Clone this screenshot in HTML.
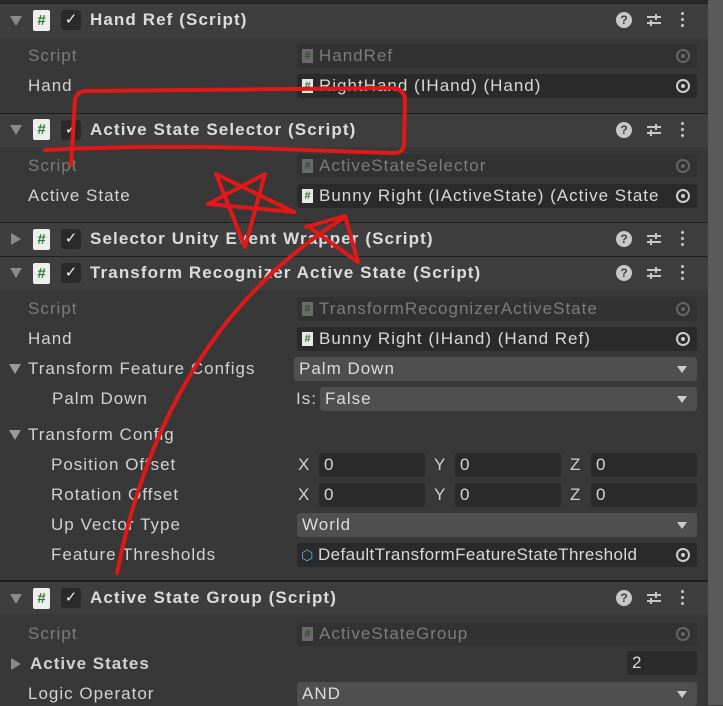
<!DOCTYPE html>
<html><head><meta charset="utf-8"><style>
body{margin:0;width:723px;height:705px;background:#383838;overflow:hidden;position:relative;font-family:"Liberation Sans","DejaVu Sans",sans-serif;}
.a{position:absolute;}
.hdr{position:absolute;left:0;width:708px;background:#3e3e3e;border-top:1px solid #1f1f1f;}
.ht{position:absolute;left:90px;font-weight:bold;font-size:17px;color:#dcdcdc;letter-spacing:1.1px;}
.tri{position:absolute;left:10px;width:0;height:0;border-left:6px solid transparent;border-right:6px solid transparent;border-top:10px solid #8a8a8a;}
.trir{position:absolute;width:0;height:0;border-top:6px solid transparent;border-bottom:6px solid transparent;border-left:10px solid #8a8a8a;}
.doc{position:absolute;left:33px;width:17px;height:21px;background:#eee;border-radius:2px;color:#2e7d32;font-size:15px;font-weight:bold;text-align:center;line-height:21px;}
.cb{position:absolute;left:61px;width:20px;height:20px;background:#2a2a2a;border-radius:3px;color:#eee;font-size:15px;text-align:center;line-height:20px;}
.lbl{position:absolute;font-size:17px;color:#d2d2d2;letter-spacing:1px;}
.dim{color:#7c7c7c;}
.fld{position:absolute;left:297px;width:400px;height:24px;background:#2a2a2a;border-radius:3px;font-size:17px;color:#d8d8d8;line-height:24px;box-sizing:border-box;padding-left:22px;white-space:nowrap;overflow:hidden;letter-spacing:1px;}
.fld.d{background:#323232;color:#7c7c7c;}
.ic{position:absolute;left:5px;top:5px;width:11px;height:14px;background:#e8e8e8;color:#2e7d32;font-size:11px;line-height:14px;text-align:center;font-weight:bold;letter-spacing:0;}
.d .ic{background:#6a6a6a;color:#2e4d2e;}
.tgt{position:absolute;right:0;top:0;width:28px;height:24px;background:#2a2a2a;}
.tgt:after{content:"";position:absolute;left:7px;top:5px;width:10px;height:10px;border:2px solid #ccc;border-radius:50%;}
.tgt:before{content:"";position:absolute;left:12px;top:10px;width:4px;height:4px;background:#ccc;border-radius:50%;z-index:1;}
.d .tgt{background:#323232;} .d .tgt:after{border-color:#666;} .d .tgt:before{background:#666;}
.dd{position:absolute;height:24px;background:#4f4f4f;border-radius:3px;font-size:17px;color:#dcdcdc;line-height:24px;padding-left:5px;box-sizing:border-box;letter-spacing:1px;}
.dd:after{content:"";position:absolute;right:10px;top:9px;border-left:5px solid transparent;border-right:5px solid transparent;border-top:7px solid #ccc;}
.num{position:absolute;height:24px;width:106px;background:#2a2a2a;border-radius:3px;font-size:17px;color:#d8d8d8;line-height:24px;padding-left:5px;box-sizing:border-box;}
.q{position:absolute;left:616px;width:16px;height:16px;border-radius:50%;background:#c8c8c8;color:#3e3e3e;font-size:12px;font-weight:bold;text-align:center;line-height:16px;}
.sl{position:absolute;left:646px;width:16px;height:14px;}
.dots{position:absolute;left:681px;width:4px;}
.dots i{display:block;width:3px;height:3px;background:#c8c8c8;border-radius:50%;margin-bottom:3px;}
</style></head><body>
<div class="a" style="left:708px;top:0;width:15px;height:705px;background:#5a5a5a"></div>
<div class="a" style="left:0;top:0;width:708px;height:3px;background:#2a2a2a"></div>

<div class="hdr" style="top:3px;height:34px"></div>
<div class="tri" style="top:16px"></div><div class="doc" style="top:10px">#</div><div class="cb" style="top:10px">✓</div>
<div class="ht" style="top:10px">Hand Ref (Script)</div>
<div class="q" style="top:12px">?</div>
<svg class="sl" style="top:13px" viewBox="0 0 16 14"><path d="M1 4h14M1 10h14M10 1v6M5 7v6" stroke="#c8c8c8" stroke-width="2"/></svg>
<div class="dots" style="top:12px"><i></i><i></i><i></i></div>
<div class="lbl dim" style="left:28px;top:46px">Script</div>
<div class="fld d" style="top:44px"><span class="ic">#</span>HandRef<span class="tgt"></span></div>
<div class="lbl" style="left:28px;top:76px">Hand</div>
<div class="fld" style="top:74px"><span class="ic">#</span>RightHand (IHand) (Hand)<span class="tgt"></span></div>

<div class="hdr" style="top:113px;height:33px"></div>
<div class="tri" style="top:125px"></div><div class="doc" style="top:119px">#</div><div class="cb" style="top:120px">✓</div>
<div class="ht" style="top:120px">Active State Selector (Script)</div>
<div class="q" style="top:122px">?</div>
<svg class="sl" style="top:123px" viewBox="0 0 16 14"><path d="M1 4h14M1 10h14M10 1v6M5 7v6" stroke="#c8c8c8" stroke-width="2"/></svg>
<div class="dots" style="top:122px"><i></i><i></i><i></i></div>
<div class="lbl dim" style="left:28px;top:156px">Script</div>
<div class="fld d" style="top:154px"><span class="ic">#</span>ActiveStateSelector<span class="tgt"></span></div>
<div class="lbl" style="left:28px;top:186px">Active State</div>
<div class="fld" style="top:184px"><span class="ic">#</span>Bunny Right (IActiveState) (Active State<span class="tgt"></span></div>

<div class="hdr" style="top:222px;height:33px"></div>
<div class="trir" style="left:11px;top:233px"></div><div class="doc" style="top:229px">#</div><div class="cb" style="top:229px">✓</div>
<div class="ht" style="top:229px">Selector Unity Event Wrapper (Script)</div>
<div class="q" style="top:231px">?</div>
<svg class="sl" style="top:232px" viewBox="0 0 16 14"><path d="M1 4h14M1 10h14M10 1v6M5 7v6" stroke="#c8c8c8" stroke-width="2"/></svg>
<div class="dots" style="top:231px"><i></i><i></i><i></i></div>

<div class="hdr" style="top:256px;height:33px"></div>
<div class="tri" style="top:268px"></div><div class="doc" style="top:263px">#</div><div class="cb" style="top:263px">✓</div>
<div class="ht" style="top:263px">Transform Recognizer Active State (Script)</div>
<div class="q" style="top:265px">?</div>
<svg class="sl" style="top:266px" viewBox="0 0 16 14"><path d="M1 4h14M1 10h14M10 1v6M5 7v6" stroke="#c8c8c8" stroke-width="2"/></svg>
<div class="dots" style="top:265px"><i></i><i></i><i></i></div>
<div class="lbl dim" style="left:28px;top:299px">Script</div>
<div class="fld d" style="top:297px"><span class="ic">#</span>TransformRecognizerActiveState<span class="tgt"></span></div>
<div class="lbl" style="left:28px;top:329px">Hand</div>
<div class="fld" style="top:327px"><span class="ic">#</span>Bunny Right (IHand) (Hand Ref)<span class="tgt"></span></div>
<div class="tri" style="top:364px;border-top-color:#9a9a9a;left:9px"></div>
<div class="lbl" style="left:28px;top:359px">Transform Feature Configs</div>
<div class="dd" style="left:294px;top:357px;width:403px">Palm Down</div>
<div class="lbl" style="left:52px;top:389px">Palm Down</div>
<div class="lbl" style="left:296px;top:389px">Is:</div>
<div class="dd" style="left:320px;top:387px;width:377px">False</div>
<div class="tri" style="top:430px;border-top-color:#9a9a9a;left:9px"></div>
<div class="lbl" style="left:28px;top:425px">Transform Config</div>
<div class="lbl" style="left:51px;top:455px">Position Offset</div>
<div class="lbl" style="left:298px;top:455px">X</div><div class="num" style="left:319px;top:453px">0</div>
<div class="lbl" style="left:434px;top:455px">Y</div><div class="num" style="left:455px;top:453px">0</div>
<div class="lbl" style="left:570px;top:455px">Z</div><div class="num" style="left:591px;top:453px">0</div>
<div class="lbl" style="left:51px;top:485px">Rotation Offset</div>
<div class="lbl" style="left:298px;top:485px">X</div><div class="num" style="left:319px;top:483px">0</div>
<div class="lbl" style="left:434px;top:485px">Y</div><div class="num" style="left:455px;top:483px">0</div>
<div class="lbl" style="left:570px;top:485px">Z</div><div class="num" style="left:591px;top:483px">0</div>
<div class="lbl" style="left:51px;top:515px">Up Vector Type</div>
<div class="dd" style="left:297px;top:513px;width:400px">World</div>
<div class="lbl" style="left:51px;top:545px">Feature Thresholds</div>
<div class="fld" style="top:543px;padding-left:21px;letter-spacing:0.4px"><span class="ic" style="background:none;color:#6ab0e0;font-size:14px;left:4px">⬡</span>DefaultTransformFeatureStateThreshold<span class="tgt"></span></div>

<div class="a" style="left:0;top:580px;width:708px;height:3px;background:#1f1f1f"></div>
<div class="hdr" style="top:582px;height:32px;border-top:none"></div>
<div class="tri" style="top:594px"></div><div class="doc" style="top:588px">#</div><div class="cb" style="top:588px">✓</div>
<div class="ht" style="top:588px">Active State Group (Script)</div>
<div class="q" style="top:590px">?</div>
<svg class="sl" style="top:591px" viewBox="0 0 16 14"><path d="M1 4h14M1 10h14M10 1v6M5 7v6" stroke="#c8c8c8" stroke-width="2"/></svg>
<div class="dots" style="top:590px"><i></i><i></i><i></i></div>
<div class="lbl dim" style="left:28px;top:624px">Script</div>
<div class="fld d" style="top:622px"><span class="ic">#</span>ActiveStateGroup<span class="tgt"></span></div>
<div class="trir" style="left:11px;top:658px"></div>
<div class="lbl" style="left:30px;top:654px;font-weight:bold">Active States</div>
<div class="num" style="left:627px;top:651px;width:70px">2</div>
<div class="lbl" style="left:28px;top:684px">Logic Operator</div>
<div class="dd" style="left:297px;top:682px;width:400px">AND</div>

<svg class="a" style="left:0;top:0" width="723" height="705" viewBox="0 0 723 705">
<g fill="none" stroke="#e01818" stroke-width="4" stroke-linecap="round" stroke-linejoin="round">
<path d="M71 165 L75 100 Q76 92 86 91 L390 88 Q404 88 405 100 L404 145 Q403 154 390 153 L250 148 Q150 145 45 150"/>
<path d="M216 174 L245 247 L265 174 L208 204 L294 212 Z"/>
<path d="M117 573 Q165 330 345 217"/>
<path d="M306 227 L345 216 L358 262 L312 229"/>
</g></svg>
</body></html>
